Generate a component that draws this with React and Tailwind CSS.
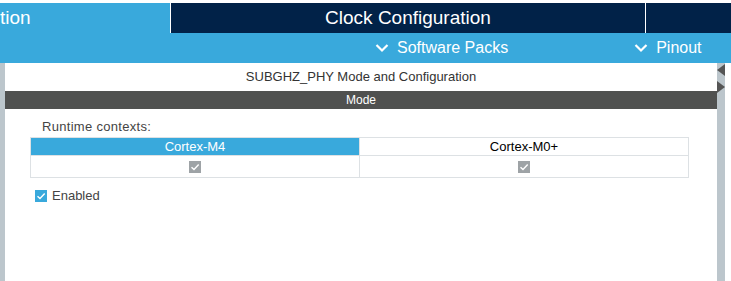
import React from 'react';

const Chevron = () => (
  <svg width="14" height="10" viewBox="0 0 14 10" className="mr-2">
    <path d="M1.5 2 L7 7.5 L12.5 2" fill="none" stroke="white" strokeWidth="2.2" />
  </svg>
);

const Check = ({ bg }) => (
  <span className={`inline-flex items-center justify-center w-[12px] h-[12px] ${bg}`}>
    <svg width="10" height="10" viewBox="0 0 10 10">
      <path d="M1.5 5.2 L4 7.6 L8.7 2.6" fill="none" stroke="white" strokeWidth="1.4" />
    </svg>
  </span>
);

export default function App() {
  return (
    <div className="w-[731px] h-[281px] bg-white overflow-hidden" style={{ fontFamily: '"Liberation Sans", Arial, sans-serif' }}>
      {/* top tabs */}
      <div className="pt-[3px] flex h-[33px]">
        <div className="w-[170px] bg-[#39a9dc] text-white text-[19px] leading-[30px] whitespace-nowrap">tion</div>
        <div className="w-px bg-white" />
        <div className="w-[474px] bg-[#012248] text-white text-[19px] leading-[30px] text-center">Clock Configuration</div>
        <div className="w-px bg-white" />
        <div className="flex-1 bg-[#012248]" />
      </div>
      {/* second bar */}
      <div className="h-[30px] bg-[#39a9dc] text-white text-[16px] flex items-center">
        <div className="ml-[375px] flex items-center"><Chevron />Software Packs</div>
        <div className="ml-[126px] flex items-center"><Chevron />Pinout</div>
      </div>
      {/* body */}
      <div className="flex h-[218px]">
        <div className="w-[5px] bg-[#bcc6cc]" />
        <div className="w-[712px] flex flex-col">
          <div className="h-[28px] text-[13px] text-[#333] flex items-center justify-center">SUBGHZ_PHY Mode and Configuration</div>
          <div className="h-[18px] bg-[#505150] text-white text-[12px] flex items-center justify-center">Mode</div>
          <div className="pl-[37px] pt-[11px] text-[13px] tracking-[0.3px] text-[#444] leading-[14px]">Runtime contexts:</div>
          <div className="ml-[25px] mt-[3px] w-[659px] border border-[#dde1e4] text-[13px]">
            <div className="flex h-[18px] border-b border-[#dde1e4]">
              <div className="w-[328px] bg-[#39a9dc] text-white flex items-center justify-center">Cortex-M4</div>
              <div className="w-px bg-[#dde1e4]" />
              <div className="flex-1 text-black flex items-center justify-center">Cortex-M0+</div>
            </div>
            <div className="flex h-[21px]">
              <div className="w-[328px] flex items-center justify-center"><Check bg="bg-[#9ea3a6]" /></div>
              <div className="w-px bg-[#dde1e4]" />
              <div className="flex-1 flex items-center justify-center"><Check bg="bg-[#9ea3a6]" /></div>
            </div>
          </div>
          <div className="ml-[30px] mt-[11px] flex items-center gap-[5px] text-[13px] leading-[14px] text-[#444]">
            <Check bg="bg-[#39a9dc]" />
            <span>Enabled</span>
          </div>
        </div>
        <div className="w-[8px] bg-[#bcc6cc] flex flex-col items-end">
          <svg width="8" height="30" viewBox="0 0 8 30" className="mt-[1px]">
            <path d="M8 0 L0 6 L8 12 Z" fill="#555" />
            <path d="M0 17 L8 23 L0 29 Z" fill="#555" />
          </svg>
        </div>
        <div className="flex-1" />
      </div>
    </div>
  );
}
